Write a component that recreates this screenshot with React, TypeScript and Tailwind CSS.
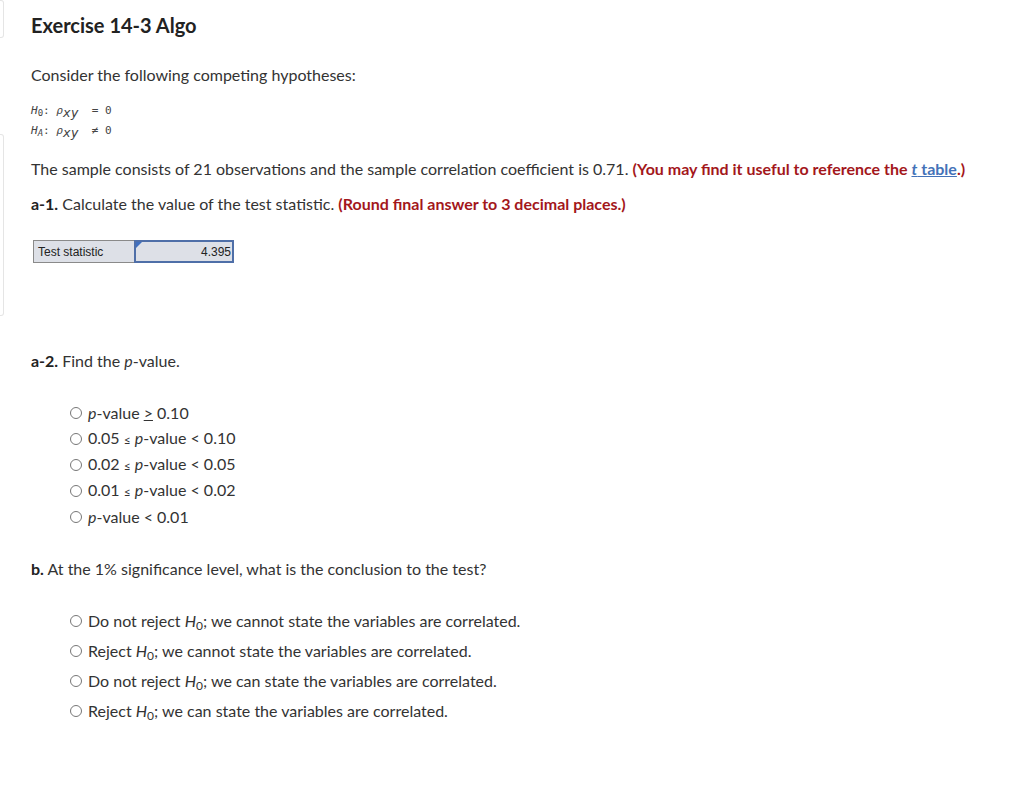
import React from 'react';

const pOptions = [
  <><i>p</i>-value <span className="underline">&gt;</span> 0.10</>,
  <>0.05 <span className="text-[12px]">≤</span> <i>p</i>-value &lt; 0.10</>,
  <>0.02 <span className="text-[12px]">≤</span> <i>p</i>-value &lt; 0.05</>,
  <>0.01 <span className="text-[12px]">≤</span> <i>p</i>-value &lt; 0.02</>,
  <><i>p</i>-value &lt; 0.01</>,
];

const H0 = () => (
  <>
    <i>H</i>
    <sub className="text-[12px] not-italic">0</sub>
  </>
);

const bOptions = [
  <>Do not reject <H0 />; we cannot state the variables are correlated.</>,
  <>Reject <H0 />; we cannot state the variables are correlated.</>,
  <>Do not reject <H0 />; we can state the variables are correlated.</>,
  <>Reject <H0 />; we can state the variables are correlated.</>,
];

function Radio() {
  return <span className="inline-block w-[12px] h-[12px] rounded-full border border-[#777] bg-white mr-[6px] shrink-0" />;
}

export default function App() {
  return (
    <div className="min-h-screen bg-white text-[#333] flex" style={{ fontFamily: 'Lato, "Open Sans", sans-serif' }}>
      {/* left edge fragments */}
      <div className="w-[4px] shrink-0 flex flex-col">
        <div className="h-[38px] border border-l-0 border-[#e5e5e5] rounded-r-[3px]" />
        <div className="h-[182px] mt-[96px] border border-l-0 border-[#e5e5e5] rounded-r-[3px]" />
      </div>

      <div className="pl-[27px] pt-[14px] flex-1">
        <h1 className="text-[20px] font-bold text-[#222] leading-[22px]">Exercise 14-3 Algo</h1>

        <p className="mt-[29px] text-[16px] leading-[20px]">Consider the following competing hypotheses:</p>

        <div className="mt-[16px] text-[11px] leading-[20px] text-[#444]" style={{ fontFamily: '"DejaVu Sans Mono", monospace' }}>
          <div className="h-[20px]">
            <i>H</i><sub className="text-[9px]">0</sub>: <i>ρ</i><sub className="text-[13px] italic">xy</sub> &nbsp;= 0
          </div>
          <div className="h-[20px]">
            <i>H</i><sub className="text-[9px] italic">A</sub>: <i>ρ</i><sub className="text-[13px] italic">xy</sub> &nbsp;≠ 0
          </div>
        </div>

        <p className="mt-[18px] text-[16px] leading-[20px]">
          The sample consists of 21 observations and the sample correlation coefficient is 0.71.{' '}
          <b className="text-[#a3171b]">
            (You may find it useful to reference the{' '}
            <span className="text-[#4472b8] underline"><i>t</i> table</span>.)
          </b>
        </p>

        <p className="mt-[15px] text-[16px] leading-[20px]">
          <b className="text-[#222]">a-1.</b> Calculate the value of the test statistic.{' '}
          <b className="text-[#a3171b]">(Round final answer to 3 decimal places.)</b>
        </p>

        <div className="mt-[26px] ml-[2px] flex w-[201px] h-[23px] text-[12px]" style={{ fontFamily: '"Liberation Sans", Arial, sans-serif' }}>
          <div className="w-[101px] bg-[#dde0e7] border border-[#8a8a8a] border-r-0 flex items-center pl-[4px] text-[#222]">
            Test statistic
          </div>
          <div className="relative flex-1 bg-[#dde0e7] border-2 border-[#4f6fa8] flex items-center justify-end pr-[1px] text-[#222]">
            <span className="absolute left-0 top-0 w-0 h-0 border-t-[6px] border-r-[6px] border-t-[#3f6fc0] border-r-transparent" />
            4.395
          </div>
        </div>

        <p className="mt-[88px] text-[16px] leading-[20px]">
          <b className="text-[#222]">a-2.</b> Find the <i>p</i>-value.
        </p>

        <div className="mt-[32px] ml-[39px] flex flex-col gap-[6px] text-[16px] leading-[20px]">
          {pOptions.map((o, i) => (
            <label key={i} className="flex items-center h-[20px]">
              <Radio />
              <span>{o}</span>
            </label>
          ))}
        </div>

        <p className="mt-[32px] text-[16px] leading-[20px]">
          <b className="text-[#222]">b.</b> At the 1% significance level, what is the conclusion to the test?
        </p>

        <div className="mt-[32px] ml-[39px] flex flex-col gap-[10px] text-[16px] leading-[20px]">
          {bOptions.map((o, i) => (
            <label key={i} className="flex items-center h-[20px]">
              <Radio />
              <span>{o}</span>
            </label>
          ))}
        </div>
      </div>
    </div>
  );
}
